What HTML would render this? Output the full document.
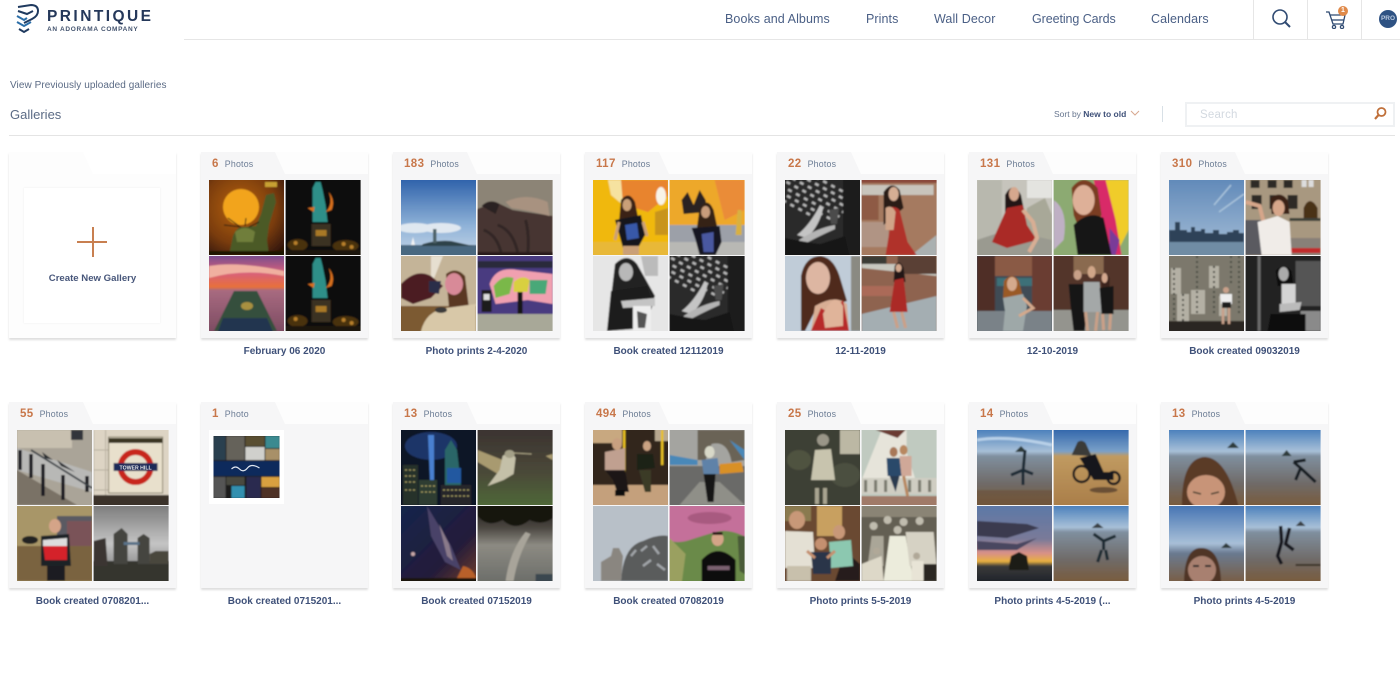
<!DOCTYPE html>
<html lang="en"><head><meta charset="utf-8"><title>Printique Galleries</title>
<style>
html,body{margin:0;padding:0;background:#fff;width:1400px;height:700px;overflow:hidden;font-family:"Liberation Sans",sans-serif}
.a{position:absolute;white-space:nowrap}
.nav{top:12px;font-size:12.5px;line-height:15px;color:#4a5f85;letter-spacing:.08px}
.c{position:absolute;width:167px;height:186px;background:#f6f6f7;box-shadow:0 2px 2px #dedede}
.c i{position:absolute;left:74px;top:0;right:0;height:22px;background:#fdfdfd;clip-path:polygon(0 0,100% 0,100% 100%,10px 100%)}
.n{position:absolute;left:11px;top:5.5px;font-size:11px;line-height:13px;white-space:nowrap;color:#6b7c94}
.n b{color:#c8774a;font-size:11.5px;margin-right:6px;letter-spacing:.4px}
.n span{font-size:8.8px;letter-spacing:.2px}
.t{position:absolute;top:193px;left:-10px;width:187px;text-align:center;font-size:10px;line-height:13px;font-weight:bold;color:#3f5179;white-space:nowrap}
</style></head><body>
<div class="a" style="left:0;top:39px;width:1400px;height:1px;background:#e6e6e6"></div>
<div class="a" style="left:0;top:36px;width:184px;height:5px;background:#fff"></div>
<svg class="a" style="left:14px;top:2px" width="28" height="32" viewBox="0 0 28 32" fill="none"><path d="M4 5L17 3Q24 3 24 9Q24 14 18 17L10 21" stroke="#1f3a5f" stroke-width="2"/><path d="M4 9L13 12L19 9" stroke="#1f3a5f" stroke-width="2"/><path d="M3 14L10 18L13 16" stroke="#2b6ea8" stroke-width="2"/><path d="M3 20L10 24L17 20" stroke="#2b6ea8" stroke-width="2"/><path d="M5 27L10 30L15 27" stroke="#1f3a5f" stroke-width="2"/></svg>
<div class="a" style="left:47px;top:8px;font-size:15.5px;line-height:18px;font-weight:bold;letter-spacing:2.45px;color:#25385a">PRINTIQUE</div>
<div class="a" style="left:47px;top:26px;font-size:6.5px;line-height:8px;font-weight:bold;letter-spacing:.68px;color:#44546f">AN ADORAMA COMPANY</div>
<div class="a nav" style="left:725px">Books and Albums</div>
<div class="a nav" style="left:866px">Prints</div>
<div class="a nav" style="left:934px">Wall Decor</div>
<div class="a nav" style="left:1032px;letter-spacing:-.08px">Greeting Cards</div>
<div class="a nav" style="left:1151px">Calendars</div>
<div class="a" style="left:1253px;top:0;width:1px;height:39px;background:#e6e6e6"></div>
<div class="a" style="left:1307px;top:0;width:1px;height:39px;background:#e6e6e6"></div>
<div class="a" style="left:1361px;top:0;width:1px;height:39px;background:#e6e6e6"></div>
<svg class="a" style="left:1270px;top:8px" width="22" height="22" fill="none" stroke="#2f4a72" stroke-width="1.6"><circle cx="10" cy="9" r="7"/><path d="M15 14L20 19" stroke-width="2"/></svg>
<svg class="a" style="left:1324px;top:5px" width="28" height="24" fill="none" stroke="#2f4a72" stroke-width="1.3"><path d="M2 7H5L9 19H19L21 10H6"/><path d="M8 15H20"/><circle cx="10" cy="22" r="1.6"/><circle cx="18" cy="22" r="1.6"/><circle cx="19" cy="6" r="5" fill="#e08a4a" stroke="none"/></svg>
<div class="a" style="left:1341px;top:7px;width:5px;font-size:7px;line-height:8px;color:#fff;font-weight:bold">1</div>
<div class="a" style="left:1379px;top:10px;width:18px;height:18px;border-radius:50%;background:#2e5283;color:#b9c9de;font-size:6.5px;font-weight:bold;line-height:18px;text-align:center">PRO</div>

<div class="a" style="left:10px;top:80px;font-size:10px;line-height:12px;letter-spacing:.065px;color:#5b6b85">View Previously uploaded galleries</div>
<div class="a" style="left:10px;top:107px;font-size:13px;line-height:16px;color:#5b6b85">Galleries</div>
<div class="a" style="left:1054px;top:109px;font-size:8.5px;line-height:10px;color:#66758e">Sort by <b style="color:#3f5179">New to old</b></div>
<svg class="a" style="left:1130px;top:110px" width="10" height="7" fill="none" stroke="#d8a890" stroke-width="1"><path d="M1 1L5 5L9 1"/></svg>
<div class="a" style="left:1162px;top:106px;width:1px;height:16px;background:#d8e0e6"></div>
<div class="a" style="left:1185px;top:102px;width:206px;height:21px;border:2px solid #eff1f3"></div>
<div class="a" style="left:1200px;top:108px;font-size:11.5px;line-height:14px;letter-spacing:.2px;color:#d3d9e0">Search</div>
<svg class="a" style="left:1373px;top:106px" width="15" height="15" fill="none" stroke="#c0703a" stroke-width="1.8"><circle cx="8.5" cy="6" r="4"/><path d="M5.5 9L2 13" stroke-width="2.2"/></svg>
<div class="a" style="left:9px;top:135px;width:1386px;height:1px;background:#e4e4e4"></div>

<div class="c" style="left:9px;top:152px;background:#fdfdfd"><i style="background:#fff"></i>
<div class="a" style="left:15px;top:36px;width:136px;height:135px;background:#fff;box-shadow:0 0 2px #ececec"></div>
<div class="a" style="left:68px;top:89px;width:30px;height:1.5px;background:#c87f50"></div>
<div class="a" style="left:83px;top:75px;width:1.5px;height:30px;background:#c87f50"></div>
<div class="a" style="left:0;top:120px;width:167px;text-align:center;font-size:9.6px;line-height:13px;font-weight:bold;color:#47567a">Create New Gallery</div></div>

<div class="c" style="left:201px;top:152px"><i></i><div class="n"><b>6</b><span>Photos</span></div><div class="t">February 06 2020</div></div>
<div class="c" style="left:393px;top:152px"><i></i><div class="n"><b>183</b><span>Photos</span></div><div class="t">Photo prints 2-4-2020</div></div>
<div class="c" style="left:585px;top:152px"><i></i><div class="n"><b>117</b><span>Photos</span></div><div class="t">Book created 12112019</div></div>
<div class="c" style="left:777px;top:152px"><i></i><div class="n"><b>22</b><span>Photos</span></div><div class="t">12-11-2019</div></div>
<div class="c" style="left:969px;top:152px"><i></i><div class="n"><b>131</b><span>Photos</span></div><div class="t">12-10-2019</div></div>
<div class="c" style="left:1161px;top:152px"><i></i><div class="n"><b>310</b><span>Photos</span></div><div class="t">Book created 09032019</div></div>
<div class="c" style="left:9px;top:402px"><i></i><div class="n"><b>55</b><span>Photos</span></div><div class="t">Book created 0708201...</div></div>
<div class="c" style="left:201px;top:402px"><i></i><div class="n"><b>1</b><span>Photo</span></div><div class="t">Book created 0715201...</div></div>
<div class="c" style="left:393px;top:402px"><i></i><div class="n"><b>13</b><span>Photos</span></div><div class="t">Book created 07152019</div></div>
<div class="c" style="left:585px;top:402px"><i></i><div class="n"><b>494</b><span>Photos</span></div><div class="t">Book created 07082019</div></div>
<div class="c" style="left:777px;top:402px"><i></i><div class="n"><b>25</b><span>Photos</span></div><div class="t">Photo prints 5-5-2019</div></div>
<div class="c" style="left:969px;top:402px"><i></i><div class="n"><b>14</b><span>Photos</span></div><div class="t">Photo prints 4-5-2019 (...</div></div>
<div class="c" style="left:1161px;top:402px"><i></i><div class="n"><b>13</b><span>Photos</span></div><div class="t">Photo prints 4-5-2019</div></div>

<svg class="a" style="left:0;top:0" width="1400" height="700" viewBox="0 0 1400 700">
<defs>
<filter id="b" x="-10%" y="-10%" width="120%" height="120%"><feGaussianBlur stdDeviation=".7"/></filter>
<radialGradient id="moon" cx=".42" cy=".38" r=".75"><stop offset="0" stop-color="#b8640c"/><stop offset=".6" stop-color="#7a3c08"/><stop offset="1" stop-color="#2a1206"/></radialGradient>
<linearGradient id="sun" x1="0" y1="0" x2="0" y2="1"><stop offset="0" stop-color="#6a4a90"/><stop offset=".25" stop-color="#d8607a"/><stop offset=".42" stop-color="#e8703a"/><stop offset=".46" stop-color="#a86a80"/><stop offset="1" stop-color="#7a4a60"/></linearGradient>
<linearGradient id="sky" x1="0" y1="0" x2="0" y2="1"><stop offset="0" stop-color="#2a5ea8"/><stop offset=".6" stop-color="#8fb2d8"/><stop offset="1" stop-color="#c8d8e8"/></linearGradient>
<linearGradient id="sky2" x1="0" y1="0" x2="0" y2="1"><stop offset="0" stop-color="#5f88b8"/><stop offset="1" stop-color="#a8c0d8"/></linearGradient>
<linearGradient id="beach" x1="0" y1="0" x2="0" y2="1"><stop offset="0" stop-color="#3f78b8"/><stop offset=".3" stop-color="#a8c0d8"/><stop offset=".36" stop-color="#7f8f9f"/><stop offset=".7" stop-color="#6f6a68"/><stop offset="1" stop-color="#7a5a38"/></linearGradient>
<linearGradient id="beach2" x1="0" y1="0" x2="0" y2="1"><stop offset="0" stop-color="#3f70b0"/><stop offset=".5" stop-color="#a8bfd8"/><stop offset=".62" stop-color="#6a7a90"/><stop offset="1" stop-color="#7a5c40"/></linearGradient>
<linearGradient id="dune" x1="0" y1="0" x2="0" y2="1"><stop offset="0" stop-color="#2a60a8"/><stop offset=".3" stop-color="#7aa0c8"/><stop offset=".36" stop-color="#c09a60"/><stop offset="1" stop-color="#a87c48"/></linearGradient>
<linearGradient id="dusk" x1="0" y1="0" x2="0" y2="1"><stop offset="0" stop-color="#5a78a8"/><stop offset=".45" stop-color="#7a7a98"/><stop offset=".62" stop-color="#d89088"/><stop offset=".72" stop-color="#e8b040"/><stop offset=".78" stop-color="#3a3a3a"/><stop offset="1" stop-color="#1c2028"/></linearGradient>
<linearGradient id="gray" x1="0" y1="0" x2="0" y2="1"><stop offset="0" stop-color="#777"/><stop offset=".5" stop-color="#c4c4c4"/><stop offset="1" stop-color="#666"/></linearGradient>
<linearGradient id="night" x1="0" y1="0" x2="1" y2="1"><stop offset="0" stop-color="#14264c"/><stop offset=".65" stop-color="#241c3a"/><stop offset="1" stop-color="#7a4228"/></linearGradient>
<linearGradient id="bird" x1="0" y1="0" x2="0" y2="1"><stop offset="0" stop-color="#3a3230"/><stop offset=".55" stop-color="#4a4838"/><stop offset="1" stop-color="#4f6a38"/></linearGradient>
<linearGradient id="storm" x1="0" y1="0" x2="0" y2="1"><stop offset="0" stop-color="#1a1614"/><stop offset=".3" stop-color="#4a4640"/><stop offset=".52" stop-color="#8c8a82"/><stop offset="1" stop-color="#6a6c68"/></linearGradient>
<g id="st"><rect x="-3" y="-3" width="81" height="81" fill="#0c0a08"/><path d="M27 8L30 2L35 2L37 10L40 25L42 42L27 42Z" fill="#2f8f88"/><path d="M40 32Q48 24 43 12Q50 20 46 30Z" fill="#d8701f"/><path d="M22 28L29 27L28 32Z" fill="#d8701f"/><rect x="26" y="44" width="19" height="22" fill="#3a3020"/><rect x="30" y="50" width="11" height="6" fill="#a87828"/><ellipse cx="12" cy="65" rx="10" ry="6" fill="#4a3010"/><ellipse cx="60" cy="66" rx="13" ry="6" fill="#4a3010"/><circle cx="10" cy="63" r="2" fill="#b8802a"/><circle cx="58" cy="64" r="2" fill="#b8802a"/><circle cx="66" cy="67" r="2" fill="#b8802a"/><rect x="-3" y="70" width="81" height="8" fill="#1f150a"/></g>
<g id="leaf"><rect x="-3" y="-3" width="81" height="81" fill="#2a2a2a"/><g stroke="#b8b8b8" stroke-width="2.4" stroke-dasharray="4 5" transform="rotate(28 30 25)"><path d="M-10 0H65M-7 6H65M-12 12H60M-6 18H60M-10 24H58M-8 30H50M-10 36H40"/></g><rect x="58" y="-3" width="20" height="81" fill="#1e1e1e"/><path d="M12 55Q25 45 35 25L38 28Q35 45 22 58Z" fill="#c4c4c4"/><path d="M14 60Q32 48 50 45L50 49Q30 58 16 66Z" fill="#b4b4b4"/><path d="M0 58Q20 62 35 64L60 56L65 78H0Z" fill="#161616"/><path d="M44 30L54 28L52 44L46 44Z" fill="#4c4c4c"/></g>
</defs>

<!-- Row 1 Card 1 -->
<svg x="209" y="180" width="75" height="75" viewBox="0 0 75 75"><g filter="url(#b)"><rect x="-3" y="-3" width="81" height="81" fill="url(#moon)"/><circle cx="32" cy="27" r="18" fill="#f2a41f"/><path d="M20 75L24 56Q28 46 36 47L47 46L52 34L57 15L65 13L67 22L60 45L58 60L60 75Z" fill="#4c5a28"/><path d="M26 52Q36 44 46 52L44 62L28 62Z" fill="#6f7e3a"/><path d="M15 45L32 47M19 38L30 46M37 38L36 46M50 42L40 47" stroke="#221a08" stroke-width="1"/><rect x="56" y="2" width="12" height="5" fill="#c8a030"/><path d="M0 73H75" stroke="#1a1206" stroke-width="4"/></g></svg>
<svg x="285.6" y="180" width="75" height="75" viewBox="0 0 75 75"><g filter="url(#b)"><use href="#st"/></g></svg>
<svg x="209" y="256" width="75" height="75" viewBox="0 0 75 75"><g filter="url(#b)"><rect x="-3" y="-3" width="81" height="81" fill="url(#sun)"/><path d="M0 10Q30 5 75 15L75 20Q35 12 0 22Z" fill="#f0b0a0"/><path d="M25 35H48L68 75H5Z" fill="#35503e"/><path d="M14 62H58L65 78H8Z" fill="#24364f"/><ellipse cx="38" cy="50" rx="6" ry="4" fill="#a89040"/></g></svg>
<svg x="285.6" y="256" width="75" height="75" viewBox="0 0 75 75"><g filter="url(#b)"><use href="#st"/></g></svg>

<!-- Row 1 Card 2 -->
<svg x="401" y="180" width="75" height="75" viewBox="0 0 75 75"><g filter="url(#b)"><rect x="-3" y="-3" width="81" height="81" fill="url(#sky)"/><ellipse cx="14" cy="48" rx="18" ry="5" fill="#dfe8f0"/><ellipse cx="40" cy="48" rx="20" ry="5" fill="#e0e8f0"/><rect x="-3" y="65" width="81" height="13" fill="#4a6880"/><path d="M22 64Q35 60 50 61L72 66H20Z" fill="#2f4248"/><rect x="32" y="49" width="3.5" height="14" fill="#4d6268"/><path d="M10 65L12 57L14 65Z" fill="#f4f4f4"/></g></svg>
<svg x="477.6" y="180" width="75" height="75" viewBox="0 0 75 75"><g filter="url(#b)"><rect x="-3" y="-3" width="81" height="81" fill="#8c8476"/><path d="M-3 30L18 22L35 30L75 36V78H-3Z" fill="#463530"/><path d="M28 22Q48 12 70 22L72 36Q50 30 34 28Z" fill="#a89280"/><path d="M4 26Q12 18 22 24L18 34Z" fill="#2a2220"/><path d="M20 45Q35 50 40 72M48 40Q52 55 50 75M6 50Q20 55 24 75" stroke="#332627" stroke-width="3" fill="none"/><rect x="-3" y="72" width="81" height="6" fill="#2a1e1c"/></g></svg>
<svg x="401" y="256" width="75" height="75" viewBox="0 0 75 75"><g filter="url(#b)"><rect x="-3" y="-3" width="81" height="81" fill="#c4b498"/><path d="M30 0L42 0L30 30Z" fill="#e6dfd0"/><rect x="-3" y="50" width="81" height="28" fill="#7c5a32"/><path d="M0 28Q15 12 30 20L42 30L30 42L12 48L0 42Z" fill="#4b1c22"/><path d="M28 25L40 25L38 38L28 36Z" fill="#2a2e4a"/><path d="M45 18Q55 10 64 20L68 52L48 52Z" fill="#5a3820"/><ellipse cx="53" cy="28" rx="9" ry="11" fill="#d88a98"/><path d="M20 75Q25 55 45 52L75 48V78H20Z" fill="#d8c8a8"/><ellipse cx="40" cy="54" rx="6" ry="3" fill="#3a3a3a"/></g></svg>
<svg x="477.6" y="256" width="75" height="75" viewBox="0 0 75 75"><g filter="url(#b)"><rect x="-3" y="-3" width="81" height="81" fill="#4a3a80"/><rect x="-3" y="58" width="81" height="20" fill="#a8a898"/><path d="M0 5H75V12H0Z" fill="#2a2a3a"/><path d="M12 28Q18 10 40 14L75 18V48L50 44L18 48Z" fill="#f0a0b0"/><path d="M16 30Q25 18 36 22L32 38L18 42Z" fill="#7ab84a"/><path d="M36 26Q45 18 52 24L50 36L36 36Z" fill="#d8d040"/><path d="M52 24L70 24L68 38L52 38Z" fill="#48a878"/><rect x="4" y="34" width="10" height="22" fill="#1a1a1a"/><rect x="6" y="38" width="6" height="6" fill="#ddd"/><rect x="40" y="36" width="5" height="22" fill="#181818"/></g></svg>

<!-- Row 1 Card 3 -->
<svg x="593" y="180" width="75" height="75" viewBox="0 0 75 75"><g filter="url(#b)"><rect x="-3" y="-3" width="81" height="81" fill="#f0b810"/><path d="M22 0H75V16L55 32L32 25Z" fill="#e8842e"/><path d="M15 0L28 0L30 25L18 15Z" fill="#f6e2a0"/><ellipse cx="68" cy="16" rx="5" ry="9" fill="#f8f4e8"/><path d="M62 32L75 28V55H62Z" fill="#c8941a"/><rect x="-3" y="62" width="81" height="16" fill="#e8b838"/><path d="M28 20Q36 10 42 22L46 42L26 42Z" fill="#3a2418"/><ellipse cx="34" cy="25" rx="4.5" ry="6" fill="#caa078"/><path d="M22 40L48 35L52 55L45 68H30L25 50Z" fill="#17171f"/><path d="M32 45L44 43L46 58L34 60Z" fill="#3858a8"/><path d="M26 42L22 60M50 42L54 56" stroke="#caa078" stroke-width="3"/><rect x="30" y="66" width="16" height="9" fill="#caa078"/></g></svg>
<svg x="669.6" y="180" width="75" height="75" viewBox="0 0 75 75"><g filter="url(#b)"><rect x="-3" y="-3" width="81" height="81" fill="#eda82c"/><path d="M0 0H45L55 40L75 30V0Z" fill="#ea8c38"/><path d="M12 20L18 12L24 25L30 10L36 20L38 32L14 34Z" fill="#2a2420"/><rect x="-3" y="45" width="81" height="33" fill="#9ca0a8"/><rect x="-3" y="62" width="81" height="16" fill="#b8b8b4"/><path d="M30 28Q38 16 44 30L50 58L26 58Z" fill="#342018"/><ellipse cx="36" cy="32" rx="4.5" ry="6" fill="#c89c7c"/><path d="M22 48L50 46L52 62L46 75H30L26 60Z" fill="#171720"/><path d="M32 54L44 52L44 72L34 72Z" fill="#4858a0"/><path d="M68 30L72 30L72 55L66 55Z" fill="#d8b040"/></g></svg>
<svg x="593" y="256" width="75" height="75" viewBox="0 0 75 75"><g filter="url(#b)"><rect x="-3" y="-3" width="81" height="81" fill="#e6e6e6"/><path d="M48 0H65V20H52Z" fill="#bbb"/><path d="M22 8Q34 -4 44 8L62 40L58 48L38 35L18 42Z" fill="#222"/><ellipse cx="33" cy="16" rx="7" ry="9" fill="#b8b8b8"/><path d="M18 35L54 30L60 48L52 72L14 75Z" fill="#1e1e1e"/><path d="M28 45L62 42L62 50L30 52Z" fill="#c4c4c4"/><rect x="40" y="50" width="18" height="25" fill="#eee"/><path d="M44 55L54 58L52 72L45 72Z" fill="#555"/></g></svg>
<svg x="669.6" y="256" width="75" height="75" viewBox="0 0 75 75"><g filter="url(#b)"><use href="#leaf"/></g></svg>

<!-- Row 1 Card 4 -->
<svg x="785" y="180" width="75" height="75" viewBox="0 0 75 75"><g filter="url(#b)"><use href="#leaf"/></g></svg>
<svg x="861.6" y="180" width="75" height="75" viewBox="0 0 75 75"><g filter="url(#b)"><rect x="-3" y="-3" width="81" height="81" fill="#a57a60"/><rect x="-3" y="-3" width="81" height="6" fill="#8a4a3a"/><rect x="0" y="5" width="72" height="10" fill="#c8c4bc"/><rect x="-3" y="15" width="20" height="25" fill="#8e5a44"/><rect x="-3" y="42" width="30" height="25" fill="#b09484"/><path d="M50 75L75 55V78Z" fill="#aab0b0"/><path d="M22 12Q30 0 38 10L42 28L22 45Z" fill="#2a1a18"/><ellipse cx="32" cy="14" rx="5" ry="7" fill="#d6ae94"/><path d="M24 30Q32 24 38 30L46 62L55 75H24L28 50Z" fill="#b0302a"/><path d="M24 28Q30 24 34 32L32 50L24 50Z" fill="#d0a488"/></g></svg>
<svg x="785" y="256" width="75" height="75" viewBox="0 0 75 75"><g filter="url(#b)"><rect x="-3" y="-3" width="81" height="81" fill="#c0ccd8"/><rect x="66" y="0" width="10" height="75" fill="#8a8a82"/><path d="M16 20Q20 0 36 0Q50 2 56 25L62 45L30 55L20 75H16Z" fill="#4f2a1a"/><ellipse cx="33" cy="22" rx="12" ry="16" fill="#ddb6a2"/><path d="M30 50Q50 38 62 48L64 75H26Z" fill="#d8ae94"/><path d="M26 75L36 52L46 58L58 44L64 75Z" fill="#b72b2c"/><path d="M38 58Q50 34 58 50L58 70L40 72Z" fill="#e0b49a"/></g></svg>
<svg x="861.6" y="256" width="75" height="75" viewBox="0 0 75 75"><g filter="url(#b)"><rect x="-3" y="-3" width="81" height="81" fill="#8e6450"/><rect x="0" y="0" width="25" height="10" fill="#3a3a34"/><path d="M0 8H36L75 18V20L0 12Z" fill="#c8c8c0"/><rect x="36" y="0" width="39" height="18" fill="#5a4034"/><path d="M0 30H40V40H0Z" fill="#ab6a58"/><path d="M0 58L75 40V78H0Z" fill="#a4aeb2"/><path d="M33 10Q38 2 42 12L44 26H32Z" fill="#241814"/><ellipse cx="37" cy="12" rx="3" ry="4" fill="#d4a88e"/><path d="M33 24L42 22L46 56H28Z" fill="#ab2a28"/><path d="M32 56L36 72M40 56L44 72" stroke="#caa088" stroke-width="3"/></g></svg>

<!-- Row 1 Card 5 -->
<svg x="977" y="180" width="75" height="75" viewBox="0 0 75 75"><g filter="url(#b)"><rect x="-3" y="-3" width="81" height="81" fill="#c6c4bc"/><rect x="0" y="0" width="25" height="75" fill="#b8b8ae"/><rect x="50" y="0" width="25" height="18" fill="#e4e4e0"/><path d="M50 28L68 18L75 35V75H45Z" fill="#a8a898"/><path d="M0 60L30 50L75 60V78H0Z" fill="#9a9a90"/><path d="M28 15Q36 0 44 15L48 35L28 32Z" fill="#241512"/><ellipse cx="37" cy="14" rx="5" ry="7" fill="#d6a88e"/><path d="M30 28L46 25L50 45L60 60L30 68L15 62Z" fill="#aa2a28"/><path d="M46 30L56 42L60 58L52 72" stroke="#d8ae94" stroke-width="4" fill="none"/></g></svg>
<svg x="1053.6" y="180" width="75" height="75" viewBox="0 0 75 75"><g filter="url(#b)"><rect x="-3" y="-3" width="81" height="81" fill="#8caa72"/><path d="M0 20Q15 30 10 60L0 70Z" fill="#bfb0c4"/><path d="M40 0H75V50L62 75H52Z" fill="#f0cc2a"/><path d="M40 0H52L62 40L68 75H55Z" fill="#d82a68"/><path d="M56 48L66 60L62 75H56Z" fill="#7a3a98"/><path d="M18 8Q30 -8 44 8L48 35L30 60L20 35Z" fill="#7a3c20"/><ellipse cx="30" cy="20" rx="11" ry="15" fill="#deb098"/><path d="M20 45Q35 30 50 38L58 75H24Z" fill="#141414"/></g></svg>
<svg x="977" y="256" width="75" height="75" viewBox="0 0 75 75"><g filter="url(#b)"><rect x="-3" y="-3" width="81" height="81" fill="#3f4c54"/><rect x="0" y="0" width="18" height="55" fill="#4f2e28"/><rect x="55" y="0" width="20" height="55" fill="#6a3c32"/><rect x="18" y="0" width="37" height="20" fill="#8a5a44"/><rect x="20" y="22" width="35" height="8" fill="#3d7078"/><path d="M0 55H75V78H0Z" fill="#7a8288"/><path d="M27 25Q35 15 42 25L46 42L26 42Z" fill="#9a5a28"/><ellipse cx="35" cy="28" rx="5" ry="7" fill="#d4a98c"/><path d="M26 42L46 38L50 50L46 75H26L28 55Z" fill="#9ea8a8"/><path d="M46 42L56 52L42 60" stroke="#d4a98c" stroke-width="3" fill="none"/></g></svg>
<svg x="1053.6" y="256" width="75" height="75" viewBox="0 0 75 75"><g filter="url(#b)"><rect x="-3" y="-3" width="81" height="81" fill="#53362c"/><rect x="20" y="0" width="30" height="18" fill="#8a6a50"/><rect x="-3" y="54" width="81" height="24" fill="#94948e"/><ellipse cx="24" cy="19" rx="4" ry="5" fill="#c8a088"/><path d="M15 28L34 28L34 50L31 75H20L17 50Z" fill="#171719"/><ellipse cx="38" cy="16" rx="4" ry="6" fill="#d0a688"/><path d="M30 26L46 26L48 56H30Z" fill="#a4a8a8"/><path d="M32 56L34 75M44 56L42 75" stroke="#c8a088" stroke-width="3"/><path d="M48 20Q52 14 56 22L56 32L48 32Z" fill="#3a221a"/><ellipse cx="51" cy="22" rx="3" ry="5" fill="#d4a88e"/><path d="M46 32L60 30L60 58H48Z" fill="#161618"/><path d="M49 58L50 74M57 58L56 74" stroke="#caa088" stroke-width="3"/></g></svg>

<!-- Row 1 Card 6 -->
<svg x="1169" y="180" width="75" height="75" viewBox="0 0 75 75"><g filter="url(#b)"><rect x="-3" y="-3" width="81" height="81" fill="url(#sky2)"/><path d="M45 25L62 5M50 32L75 14" stroke="#a8c2da" stroke-width="1.6"/><path d="M0 62V50H6V42H11V50H18V52H22V47H26V51H32V49H36V53H44V50H50V54H58V52H64V50H70V53H75V62Z" fill="#2f4258"/><rect x="-3" y="62" width="81" height="16" fill="#6f8ca4"/></g></svg>
<svg x="1245.6" y="180" width="75" height="75" viewBox="0 0 75 75"><g filter="url(#b)"><rect x="-3" y="-3" width="81" height="81" fill="#a89880"/><g fill="#2f2a28"><rect x="5" y="0" width="9" height="8"/><rect x="22" y="0" width="9" height="8"/><rect x="38" y="0" width="9" height="8"/><rect x="6" y="15" width="10" height="14"/><rect x="24" y="15" width="10" height="14"/><rect x="42" y="15" width="10" height="14"/></g><g fill="#ddd"><rect x="56" y="0" width="5" height="7"/><rect x="63" y="0" width="5" height="7"/></g><path d="M58 28Q64 14 72 28V40H58Z" fill="#4a3018"/><rect x="44" y="38" width="31" height="3" fill="#3d4038"/><rect x="-3" y="40" width="30" height="35" fill="#5a5a60"/><rect x="42" y="58" width="33" height="17" fill="#888078"/><rect x="42" y="68" width="33" height="5" fill="#c02a2a"/><path d="M25 18Q35 10 42 20L44 34L26 34Z" fill="#3a2418"/><ellipse cx="33" cy="28" rx="6" ry="8" fill="#d6a68a"/><path d="M0 22L14 26L18 42" stroke="#d6a68a" stroke-width="4" fill="none"/><path d="M12 42L32 36L44 42L46 75H16Z" fill="#f0ece8"/></g></svg>
<svg x="1169" y="256" width="75" height="75" viewBox="0 0 75 75"><g filter="url(#b)"><rect x="-3" y="-3" width="81" height="81" fill="#7c786c"/><g fill="#b4b0a4"><rect x="2" y="12" width="10" height="26"/><rect x="40" y="10" width="10" height="22"/><rect x="8" y="38" width="12" height="28"/><rect x="22" y="34" width="14" height="24"/><rect x="50" y="40" width="8" height="20"/></g><g stroke="#4a4842" stroke-width="2" stroke-dasharray="2 3"><path d="M5 12V66M14 38V66M28 0V60M45 10V60M62 0V30M70 0V60"/></g><rect x="-3" y="65" width="81" height="13" fill="#2a2824"/><circle cx="57" cy="34" r="3" fill="#c8a08a"/><path d="M50 36L62 36M51 38H63V48H52Z" fill="#eee"/><rect x="53" y="46" width="9" height="6" fill="#1a1a1a"/><path d="M54 52V68M60 52V68" stroke="#c8a08a" stroke-width="2.6"/></g></svg>
<svg x="1245.6" y="256" width="75" height="75" viewBox="0 0 75 75"><g filter="url(#b)"><rect x="-3" y="-3" width="81" height="81" fill="#242424"/><rect x="12" y="0" width="3" height="75" fill="#6a6a6a"/><rect x="50" y="5" width="25" height="45" fill="#555"/><rect x="55" y="55" width="20" height="20" fill="#8a8a8a"/><path d="M30 15Q38 5 46 15L48 30H32Z" fill="#111"/><ellipse cx="38" cy="18" rx="5" ry="7" fill="#aaa"/><path d="M36 28H50V50H36Z" fill="#d4d4d4"/><path d="M34 48L56 46L54 54L34 56Z" fill="#bbb"/><path d="M25 58H60V75H22Z" fill="#0a0a0a"/></g></svg>

<!-- Row 2 Card 1 -->
<svg x="17" y="430" width="75" height="75" viewBox="0 0 75 75"><g filter="url(#b)"><rect x="-3" y="-3" width="81" height="81" fill="#aaa498"/><rect x="0" y="0" width="55" height="18" fill="#c8c0b0"/><rect x="54" y="0" width="12" height="10" fill="#33363a"/><path d="M0 18L75 42V62L0 40Z" fill="#b8b8b6"/><path d="M0 40L60 75H0Z" fill="#7a7266"/><g stroke="#17181c" stroke-width="3.4"><path d="M3 20V40M14 24V48M26 34V66M46 45V70M70 46V62"/></g><path d="M14 20L75 58" stroke="#3a3f45" stroke-width="1.8"/><path d="M25 22L36 30L28 28ZM40 30L58 42L44 36Z" fill="#22252a"/></g></svg>
<svg x="93.6" y="430" width="75" height="75" viewBox="0 0 75 75"><g filter="url(#b)"><rect x="-3" y="-3" width="81" height="81" fill="#ddd4c4"/><path d="M0 0V75M12 0V75M0 20H15M0 40H15M0 60H15" stroke="#b8b0a0" stroke-width="1"/><rect x="15" y="7" width="54" height="56" fill="#e8e0cc" stroke="#8a8470"/><rect x="15" y="8" width="54" height="5" fill="#3a3420"/><rect x="-3" y="65" width="81" height="13" fill="#3a322a"/><circle cx="42" cy="37" r="15" fill="none" stroke="#c8281c" stroke-width="6"/><rect x="20" y="33" width="44" height="8" fill="#1c2c58"/></g><text x="42" y="39.4" font-family="Liberation Sans,sans-serif" font-size="5.2" font-weight="bold" fill="#e8e8e8" text-anchor="middle">TOWER HILL</text></svg>
<svg x="17" y="506" width="75" height="75" viewBox="0 0 75 75"><g filter="url(#b)"><rect x="-3" y="-3" width="81" height="81" fill="#a89668"/><rect x="40" y="10" width="35" height="30" fill="#5a5a62"/><rect x="50" y="15" width="25" height="25" fill="#7a5258"/><rect x="0" y="40" width="75" height="35" fill="#7a6440"/><ellipse cx="13" cy="34" rx="8" ry="4" fill="#222"/><ellipse cx="38" cy="20" rx="6" ry="7" fill="#d4a488"/><path d="M24 30L52 28L54 60L24 60Z" fill="#1c2228"/><path d="M26 38L50 38L50 54L28 54Z" fill="#d4242a"/><path d="M26 34L50 32L50 40L26 40Z" fill="#ddd"/><path d="M30 60H48V75H30Z" fill="#1c1e24"/></g></svg>
<svg x="93.6" y="506" width="75" height="75" viewBox="0 0 75 75"><g filter="url(#b)"><rect x="-3" y="-3" width="81" height="81" fill="url(#gray)"/><rect x="-3" y="55" width="81" height="23" fill="#35352e"/><path d="M0 35L12 32L14 60H0Z" fill="#3a3632"/><path d="M20 28L24 25L28 22L34 28V58H20Z" fill="#45453f"/><path d="M44 32L50 28L56 32V58H44Z" fill="#45453f"/><rect x="30" y="36" width="16" height="3" fill="#5a7288"/><path d="M56 48L62 45H75V58H56Z" fill="#4a463e"/></g></svg>

<!-- Row 2 Card 2 single -->
<rect x="209" y="430" width="75" height="74" fill="#fff"/>
<svg x="213.5" y="436" width="66" height="62" viewBox="0 0 66 62"><g filter="url(#b)"><rect x="-2" y="-2" width="70" height="66" fill="#1a1a1a"/><rect x="0" y="0" width="12" height="24" fill="#2a4050"/><rect x="13" y="0" width="18" height="24" fill="#65625a"/><rect x="32" y="0" width="19" height="10" fill="#5a5030"/><rect x="32" y="11" width="19" height="13" fill="#d0d0cc"/><rect x="52" y="0" width="14" height="12" fill="#3a8a90"/><rect x="52" y="13" width="14" height="11" fill="#a89068"/><rect x="-2" y="25" width="70" height="15" fill="#0c2c5c"/><rect x="0" y="41" width="12" height="21" fill="#555"/><rect x="13" y="41" width="18" height="8" fill="#4a4a40"/><rect x="18" y="50" width="13" height="12" fill="#3090b0"/><rect x="33" y="41" width="14" height="21" fill="#2a2a50"/><rect x="48" y="41" width="18" height="10" fill="#d8a040"/><rect x="48" y="52" width="18" height="10" fill="#503028"/></g><path d="M18 33Q22 29 26 33T34 32T46 32" stroke="#dfe6f0" stroke-width="1.2" fill="none"/></svg>

<!-- Row 2 Card 3 -->
<svg x="401" y="430" width="75" height="75" viewBox="0 0 75 75"><g filter="url(#b)"><rect x="-3" y="-3" width="81" height="81" fill="#0c1426"/><ellipse cx="30" cy="16" rx="26" ry="14" fill="#1a3568"/><path d="M27 5L33 5L33 50L29 50Z" fill="#4a80d0"/><path d="M44 20L50 10L56 20L60 55H44Z" fill="#2a6668"/><rect x="46" y="38" width="14" height="15" fill="#2058a0"/><rect x="2" y="35" width="15" height="40" fill="#25332c"/><rect x="18" y="50" width="18" height="25" fill="#2f3e32"/><rect x="40" y="55" width="30" height="20" fill="#25252c"/><g stroke="#b0a868" stroke-width="1" stroke-dasharray="2 2"><path d="M4 40H15M4 46H15M4 52H15M4 60H15M20 56H34M20 62H34M42 60H68M42 66H68"/></g></g></svg>
<svg x="477.6" y="430" width="75" height="75" viewBox="0 0 75 75"><g filter="url(#b)"><rect x="-3" y="-3" width="81" height="81" fill="url(#bird)"/><path d="M0 20L25 30L22 45L0 32Z" fill="#a89a70"/><path d="M25 26Q34 20 38 28L36 44L26 50L10 56L22 40Z" fill="#c4c0a8"/><ellipse cx="32" cy="24" rx="5" ry="4" fill="#a4a088"/><path d="M36 23L54 24" stroke="#b0a888" stroke-width="1"/><path d="M68 26L75 24V30Z" fill="#a89a70"/></g></svg>
<svg x="401" y="506" width="75" height="75" viewBox="0 0 75 75"><g filter="url(#b)"><rect x="-3" y="-3" width="81" height="81" fill="url(#night)"/><path d="M26 0Q38 20 50 40L60 64L44 56L30 30Z" fill="#4a4268"/><path d="M38 18L48 38L52 55L46 50Z" fill="#8a7a8a"/><circle cx="12" cy="48" r="2" fill="#c8a8a8"/><path d="M62 60Q72 62 75 72H56Z" fill="#b8602a"/><rect x="-3" y="72" width="81" height="6" fill="#1a1210"/></g></svg>
<svg x="477.6" y="506" width="75" height="75" viewBox="0 0 75 75"><g filter="url(#b)"><rect x="-3" y="-3" width="81" height="81" fill="url(#storm)"/><path d="M0 10Q10 22 25 14Q38 26 52 14Q65 20 75 12V-3H0Z" fill="#171311"/><path d="M28 75Q32 45 48 26L53 28Q40 50 36 75Z" fill="#a8a49a"/><path d="M58 68H75V78H58Z" fill="#3a4650"/></g></svg>

<!-- Row 2 Card 4 -->
<svg x="593" y="430" width="75" height="75" viewBox="0 0 75 75"><g filter="url(#b)"><rect x="-3" y="-3" width="81" height="81" fill="#32261f"/><rect x="-3" y="-3" width="32" height="16" fill="#c8a880"/><rect x="62" y="-3" width="16" height="14" fill="#b8a890"/><rect x="-3" y="55" width="81" height="23" fill="#c4a07c"/><rect x="30" y="0" width="2.4" height="42" fill="#e8c020"/><rect x="68" y="0" width="2.4" height="35" fill="#e8c020"/><path d="M12 22L32 18L32 40L12 40Z" fill="#c0a090"/><ellipse cx="24" cy="14" rx="5" ry="6" fill="#c8a080"/><path d="M12 40H32L36 62H24L20 50Z" fill="#1a1616"/><ellipse cx="54" cy="16" rx="4" ry="5" fill="#caa282"/><path d="M44 24L60 24L62 38L44 40Z" fill="#1d2018"/><path d="M46 40H58L58 62H52Z" fill="#3a3a28"/><rect x="22" y="60" width="10" height="6" fill="#101010"/></g></svg>
<svg x="669.6" y="430" width="75" height="75" viewBox="0 0 75 75"><g filter="url(#b)"><rect x="-3" y="-3" width="81" height="81" fill="#a4a4a0"/><path d="M28 0H75V30L62 32Q58 10 42 14L36 30L28 30Z" fill="#6a6456"/><path d="M0 25L28 30L28 35L0 35ZM60 10L75 30V20Z" fill="#4a88b8"/><rect x="-3" y="36" width="81" height="42" fill="#6a6a68"/><path d="M10 75L30 52H50L75 75Z" fill="#8f8f88"/><path d="M50 34L72 32L74 42L50 44Z" fill="#d89028"/><ellipse cx="40" cy="22" rx="5" ry="6" fill="#d8d8c8"/><path d="M32 30L48 28L50 44L34 44Z" fill="#5f82a8"/><path d="M34 44H46L44 72H38Z" fill="#181818"/></g></svg>
<svg x="593" y="506" width="75" height="75" viewBox="0 0 75 75"><g filter="url(#b)"><rect x="-3" y="-3" width="81" height="81" fill="#b8c0c8"/><path d="M28 75Q30 40 50 35Q65 28 75 30V75Z" fill="#5a5c5c"/><path d="M38 50l5-6M48 45l6-5M60 40l6 8M50 60l8-6M64 58l8 6" stroke="#a0a4a8" stroke-width="2.4"/><path d="M8 75L8 56L18 50L20 42L26 42L30 50L28 75Z" fill="#8a8680"/></g></svg>
<svg x="669.6" y="506" width="75" height="75" viewBox="0 0 75 75"><g filter="url(#b)"><rect x="-3" y="-3" width="81" height="81" fill="#6a8a48"/><path d="M-3 -3H78V32Q60 22 46 26T20 34T-3 34Z" fill="#c4709a"/><ellipse cx="40" cy="12" rx="22" ry="6" fill="#a85a80"/><path d="M0 32L16 48L12 78H-3Z" fill="#9aa060"/><path d="M68 30H78V70L70 65Z" fill="#4a5a38"/><ellipse cx="48" cy="33" rx="6" ry="7" fill="#d4a488"/><path d="M43 26H53V29H43Z" fill="#2a1a18"/><path d="M32 78V54Q48 36 66 54V78Z" fill="#111"/><path d="M38 60H60V64H38Z" fill="#7a6070"/></g></svg>

<!-- Row 2 Card 5 -->
<svg x="785" y="430" width="75" height="75" viewBox="0 0 75 75"><g filter="url(#b)"><rect x="-3" y="-3" width="81" height="81" fill="#3d4034"/><rect x="55" y="0" width="20" height="24" fill="#bcb8a4"/><ellipse cx="14" cy="30" rx="12" ry="10" fill="#50523f"/><ellipse cx="60" cy="45" rx="15" ry="12" fill="#4c5040"/><circle cx="38" cy="10" r="6" fill="#9a9688"/><path d="M30 20L46 19L50 50H26Z" fill="#c8c4ae"/><path d="M32 58V74M40 58V74" stroke="#a8a490" stroke-width="4"/></g></svg>
<svg x="861.6" y="430" width="75" height="75" viewBox="0 0 75 75"><g filter="url(#b)"><rect x="-3" y="-3" width="81" height="81" fill="#c0cac0"/><path d="M20 0H45V22L54 50H0Z" fill="#e6e4da"/><path d="M14 0L44 0L36 8Z" fill="#6a3a30"/><rect x="-3" y="48" width="81" height="16" fill="#cfcdc2"/><path d="M4 50V62M14 50V62M24 50V62M48 50V62M58 50V62M68 50V62" stroke="#7a7a70" stroke-width="3"/><rect x="-3" y="66" width="81" height="12" fill="#a07a68"/><ellipse cx="32" cy="22" rx="4" ry="5" fill="#a87858"/><path d="M25 28H38L40 46L26 46Z" fill="#2a4a6a"/><path d="M28 46L34 62L38 46Z" fill="#2a3a50"/><ellipse cx="42" cy="20" rx="4" ry="5" fill="#b88860"/><path d="M38 26H50L50 46H40Z" fill="#d0a898"/><path d="M42 46L46 66" stroke="#b88860" stroke-width="3"/></g></svg>
<svg x="785" y="506" width="75" height="75" viewBox="0 0 75 75"><g filter="url(#b)"><rect x="-3" y="-3" width="81" height="81" fill="#6a4a30"/><rect x="32" y="0" width="25" height="30" fill="#c8a060"/><path d="M0 0H26V15H0Z" fill="#8a7a50"/><ellipse cx="12" cy="14" rx="8" ry="9" fill="#c89878"/><path d="M0 25L28 26L30 62H0Z" fill="#e4e0d4"/><rect x="2" y="60" width="24" height="15" fill="#c8c0ac"/><path d="M60 45L75 58V75H50Z" fill="#251a1a"/><ellipse cx="54" cy="26" rx="6" ry="7" fill="#c89878"/><path d="M44 36L66 34L68 60L46 62Z" fill="#8cc8b0"/><ellipse cx="36" cy="38" rx="6" ry="6" fill="#c49070"/><path d="M26 46L46 46L46 68H28Z" fill="#2a3648"/><path d="M22 45L30 52M50 45L42 52" stroke="#c49070" stroke-width="3"/></g></svg>
<svg x="861.6" y="506" width="75" height="75" viewBox="0 0 75 75"><g filter="url(#b)"><rect x="-3" y="-3" width="81" height="81" fill="#645e52"/><rect x="-3" y="-3" width="81" height="14" fill="#8a8474"/><g fill="#c0bcae"><circle cx="12" cy="20" r="4"/><circle cx="26" cy="14" r="4"/><circle cx="42" cy="16" r="4"/><circle cx="58" cy="15" r="4"/><circle cx="36" cy="24" r="4"/></g><path d="M10 30H22V60H6Z" fill="#aaa698"/><path d="M28 30H44L52 75H22Z" fill="#ececdc"/><path d="M44 26H72L75 60H48Z" fill="#d6d2c4"/><path d="M0 58L20 50L22 75H0Z" fill="#ddd8c8"/><circle cx="15" cy="45" r="3.5" fill="#b0a898"/><circle cx="55" cy="50" r="3.5" fill="#b0a898"/><path d="M50 55H62V75H50Z" fill="#e8e4d6"/><rect x="62" y="58" width="13" height="17" fill="#2a2620"/></g></svg>

<!-- Row 2 Card 6 -->
<svg x="977" y="430" width="75" height="75" viewBox="0 0 75 75"><g filter="url(#b)"><rect x="-3" y="-3" width="81" height="81" fill="url(#beach)"/><path d="M0 10Q30 5 75 15" stroke="#b8d0e8" stroke-width="3" fill="none"/><path d="M38 22L44 16L50 22Z" fill="#2f3a3a"/><path d="M48 20L46 42M46 40L34 45M46 40L56 44M46 40L46 55" stroke="#1d2c34" stroke-width="3" fill="none"/><rect x="-3" y="60" width="81" height="18" fill="#6a5138" opacity=".6"/></g></svg>
<svg x="1053.6" y="430" width="75" height="75" viewBox="0 0 75 75"><g filter="url(#b)"><rect x="-3" y="-3" width="81" height="81" fill="url(#dune)"/><path d="M18 25L24 12Q28 9 32 13L38 26Z" fill="#3a3a38"/><path d="M26 28L42 24L50 42L60 42L60 50L40 50Z" fill="#15181c"/><circle cx="28" cy="44" r="8" fill="none" stroke="#15181c" stroke-width="2.4"/><circle cx="60" cy="48" r="6" fill="none" stroke="#15181c" stroke-width="2.4"/><ellipse cx="50" cy="60" rx="14" ry="3" fill="#6a5034"/></g></svg>
<svg x="977" y="506" width="75" height="75" viewBox="0 0 75 75"><g filter="url(#b)"><rect x="-3" y="-3" width="81" height="81" fill="url(#dusk)"/><path d="M0 15L50 18L62 22L30 32L0 30Z" fill="#3a3a50"/><path d="M0 35L40 38L60 32L40 44L0 44Z" fill="#4a4660"/><path d="M32 60L34 50L42 46L50 50L52 64H32Z" fill="#1f1c18"/></g></svg>
<svg x="1053.6" y="506" width="75" height="75" viewBox="0 0 75 75"><g filter="url(#b)"><rect x="-3" y="-3" width="81" height="81" fill="url(#beach)"/><path d="M38 22L44 17L50 22Z" fill="#3a4044"/><path d="M40 28L50 35L62 30M50 35L50 44M48 44L44 56M52 44L54 54" stroke="#1d2a32" stroke-width="3" fill="none"/></g></svg>

<!-- Row 2 Card 7 -->
<svg x="1169" y="430" width="75" height="75" viewBox="0 0 75 75"><g filter="url(#b)"><rect x="-3" y="-3" width="81" height="81" fill="url(#beach)"/><path d="M58 18L64 12L70 18Z" fill="#2f3a3a"/><path d="M13 78Q12 28 36 27Q58 28 70 78Z" fill="#5a3a26"/><ellipse cx="37" cy="62" rx="19" ry="17" fill="#c89478"/><path d="M24 62L32 64M42 64L50 62" stroke="#4a4032" stroke-width="1.6"/></g></svg>
<svg x="1245.6" y="430" width="75" height="75" viewBox="0 0 75 75"><g filter="url(#b)"><rect x="-3" y="-3" width="81" height="81" fill="url(#beach)"/><path d="M36 26L41 20L46 26Z" fill="#2f3a3a"/><path d="M48 32L60 30M48 32L55 38L50 50M55 38L70 52" stroke="#161c22" stroke-width="3" fill="none"/></g></svg>
<svg x="1169" y="506" width="75" height="75" viewBox="0 0 75 75"><g filter="url(#b)"><rect x="-3" y="-3" width="81" height="81" fill="url(#beach2)"/><path d="M52 42L57 37L63 42Z" fill="#2f3a3a"/><path d="M15 78Q15 42 32 42Q52 42 52 78Z" fill="#4f3626"/><ellipse cx="33" cy="64" rx="14" ry="14" fill="#a88070"/><path d="M24 60H30M36 60H42" stroke="#2a2a2a" stroke-width="2"/></g></svg>
<svg x="1245.6" y="506" width="75" height="75" viewBox="0 0 75 75"><g filter="url(#b)"><rect x="-3" y="-3" width="81" height="81" fill="url(#beach)"/><path d="M50 20L55 15L60 20Z" fill="#3a4044"/><path d="M35 20L36 36L32 50L36 58M44 22L40 38L48 44" stroke="#14181e" stroke-width="3.4" fill="none"/><path d="M50 58H75V60H50Z" fill="#3a3028"/></g></svg>
</svg>
</body></html>
